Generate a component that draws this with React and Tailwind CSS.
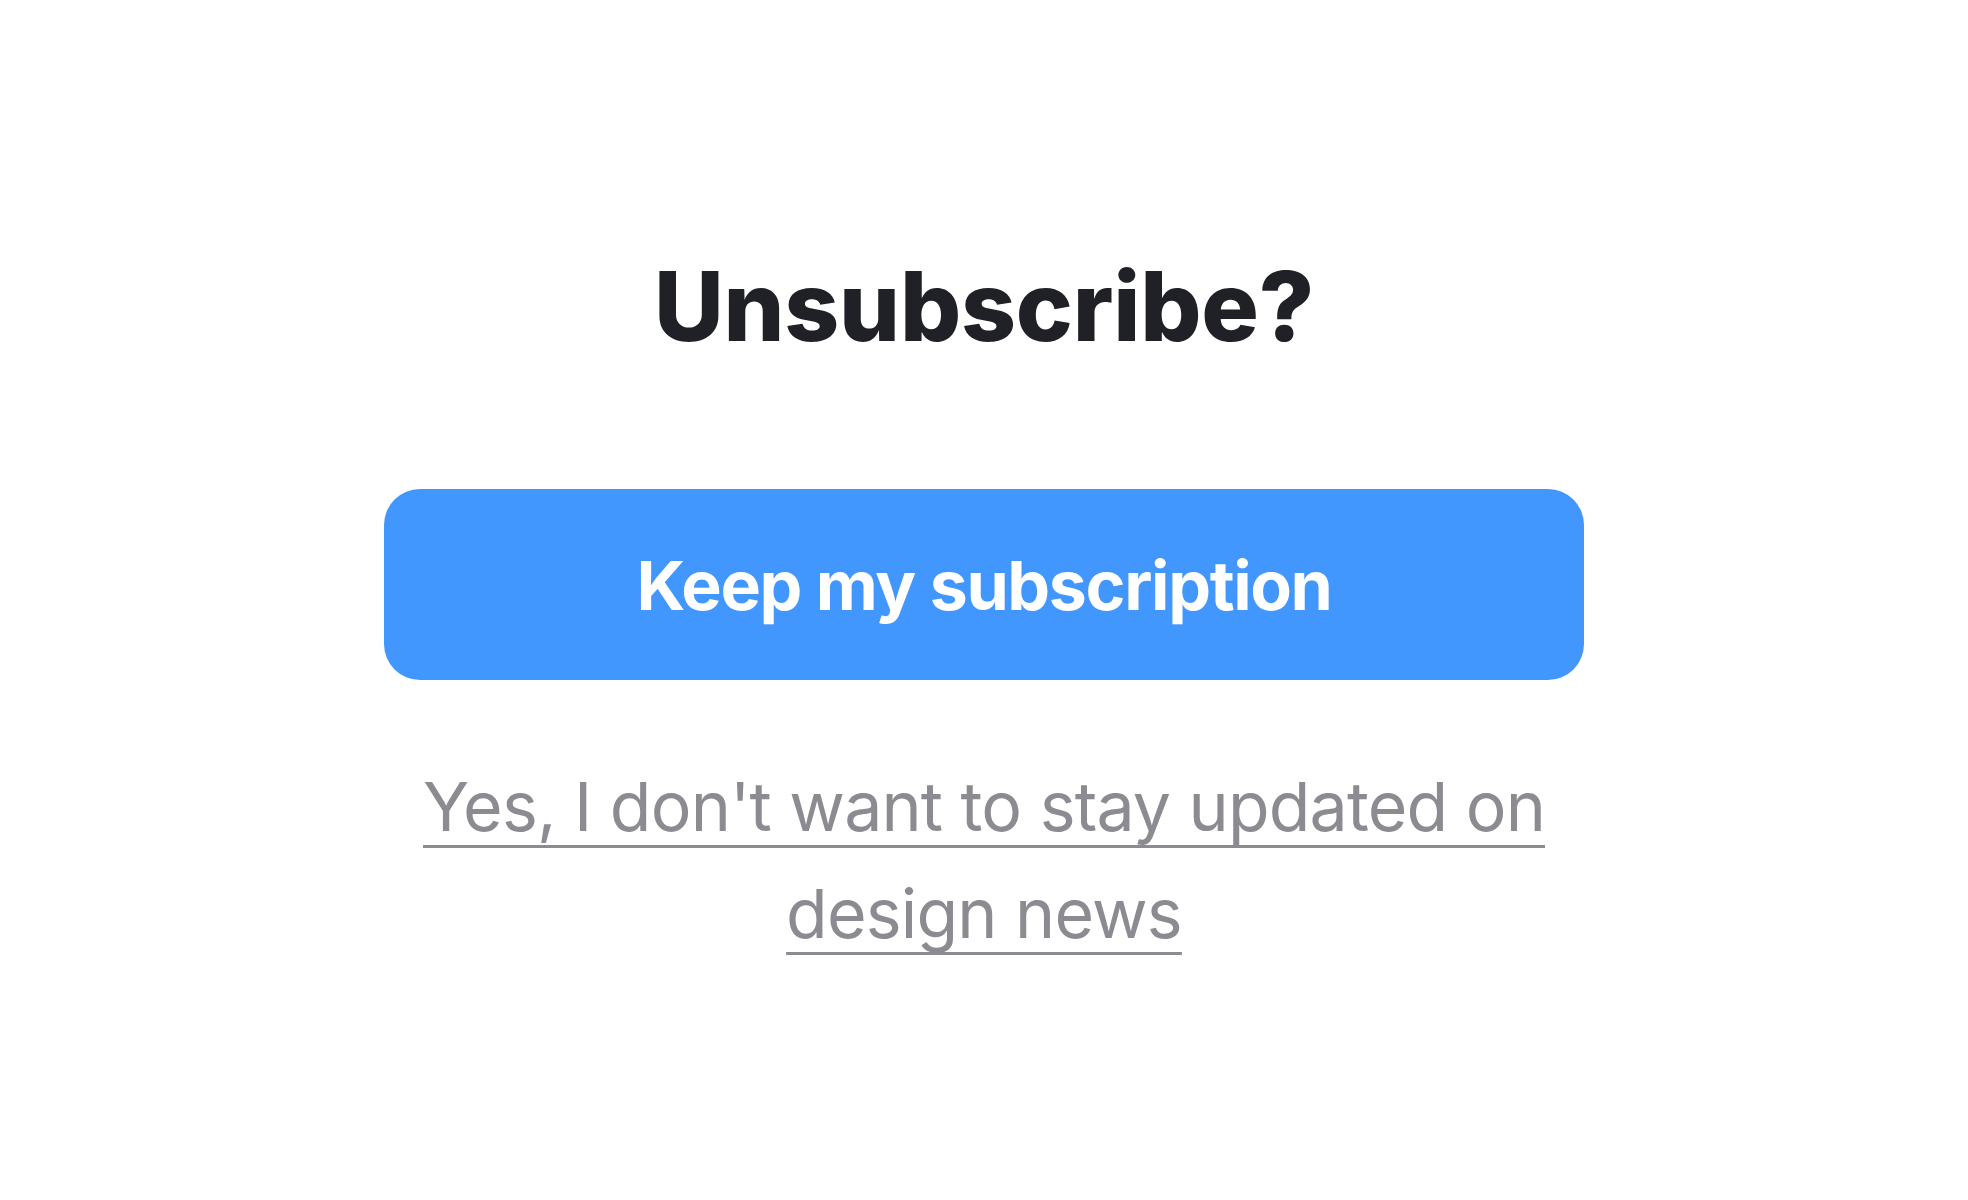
export default function App() {
  return (
    <div className="min-h-screen bg-white font-['Inter',_sans-serif]">
      <div className="mx-auto flex w-[1200px] flex-col items-center pt-[258px]">
        <h1 className="text-[96px] font-extrabold leading-none tracking-[-0.002em] text-[#202027]">
          Unsubscribe?
        </h1>
        <button className="mt-[135px] h-[191px] w-full rounded-[36px] bg-[#4197fd] text-[68px] font-bold tracking-[-0.02em] text-white">
          Keep my subscription
        </button>
        <a
          href="#"
          className="mt-[73px] text-center text-[68px] leading-[107px] tracking-[-0.012em] text-[#8b8b91] underline decoration-[3px] underline-offset-[14px] [text-decoration-skip-ink:none]"
        >
          Yes, I don't want to stay updated on design news
        </a>
      </div>
    </div>
  )
}
